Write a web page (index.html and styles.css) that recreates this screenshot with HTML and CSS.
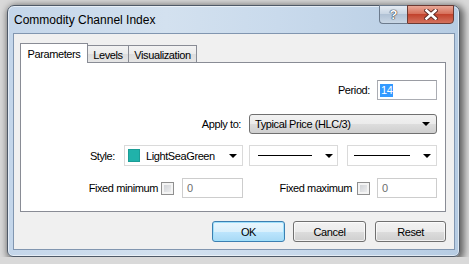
FILE: index.html
```html
<!DOCTYPE html>
<html lang="en">
<head>
  <meta charset="UTF-8">
  <title>Commodity Channel Index</title>
  <link rel="stylesheet" href="styles.css">
</head>
<body>

  <div class="window">
    <div class="titlebar">
      <span class="title">Commodity Channel Index</span>
      <div class="caption-btns">
        <div class="cap-btn help">?</div>
        <div class="cap-btn close">
          <svg width="14" height="11" viewBox="0 0 14 11">
            <path d="M2.5 1.5 L11.5 9.5 M11.5 1.5 L2.5 9.5" stroke="#5b2a24" stroke-width="4.4" stroke-linecap="square"/>
            <path d="M2.5 1.5 L11.5 9.5 M11.5 1.5 L2.5 9.5" stroke="#fff" stroke-width="2.6" stroke-linecap="square"/>
          </svg>
        </div>
      </div>
    </div>

    <div class="client">
      <div class="tabs">
        <div class="tab active">Parameters</div>
        <div class="tab t-levels">Levels</div>
        <div class="tab t-vis">Visualization</div>
      </div>

      <div class="panel">
        <div class="row r-period">
          <span class="lbl">Period:</span>
          <div class="edit period"><span class="sel">14</span></div>
        </div>

        <div class="row r-apply">
          <span class="lbl">Apply to:</span>
          <div class="combo apply">
            <span class="combo-text">Typical Price (HLC/3)</span>
            <span class="arrow"></span>
          </div>
        </div>

        <div class="row r-style">
          <span class="lbl">Style:</span>
          <div class="flat color">
            <span class="swatch"></span>
            <span class="combo-text">LightSeaGreen</span>
            <span class="arrow"></span>
          </div>
          <div class="flat line l1">
            <span class="stroke"></span>
            <span class="arrow"></span>
          </div>
          <div class="flat line l2">
            <span class="stroke"></span>
            <span class="arrow"></span>
          </div>
        </div>

        <div class="row r-fixed">
          <div class="fixed">
            <span class="lbl">Fixed minimum</span>
            <span class="check cmin"></span>
            <div class="edit off fmin">0</div>
          </div>
          <div class="fixed fixed-max">
            <span class="lbl">Fixed maximum</span>
            <span class="check cmax"></span>
            <div class="edit off fmax">0</div>
          </div>
        </div>
      </div>

      <div class="buttons">
        <div class="btn default">OK</div>
        <div class="btn">Cancel</div>
        <div class="btn reset">Reset</div>
      </div>
    </div>
  </div>

</body>
</html>
```

FILE: styles.css
```css
body {
  margin: 0;
  background: #d9d9d9;
  font-family: "Liberation Sans", Arial, sans-serif;
  font-size: 11px;
  letter-spacing: -0.4px;
  color: #000;
}

/* --- window frame --- */
.window {
  width: 453px;
  height: 252px;
  margin: 5px 0 0 7px;
  box-sizing: border-box;
  border: 1px solid #4f5a68;
  border-radius: 7px 7px 6px 6px;
  background: linear-gradient(to right, #c4d6ea, #d3e1ef 35%, #c9daec 60%, #b6cce3);
  box-shadow: inset 0 0 0 1px rgba(255,255,255,0.55), 2px 2px 7px 2px rgba(0,0,0,0.55);
  display: flex;
  flex-direction: column;
}

.titlebar {
  height: 27px;
  display: flex;
  align-items: flex-start;
  padding: 0 5px 0 6px;
}

.title {
  margin-top: 7px;
  line-height: 14px;
  font-size: 12px;
  letter-spacing: 0;
}

.caption-btns {
  margin-left: auto;
  margin-top: -1px;
  display: flex;
}

.cap-btn {
  height: 19px;
  box-sizing: border-box;
  display: flex;
  align-items: center;
  justify-content: center;
}

.help {
  width: 28px;
  border: 1px solid #6c7b8d;
  border-right: none;
  border-radius: 0 0 0 4px;
  background: linear-gradient(#e4ebf3, #c7d4e2 50%, #b1c2d5 50%, #c9d7e5);
  color: #fff;
  font-weight: bold;
  font-size: 13px;
  letter-spacing: 0;
  text-shadow: 0 0 1px #27303c, 0 0 1px #27303c, 0 0 1px #27303c;
}

.close {
  width: 47px;
  border: 1px solid #6b3a33;
  border-radius: 0 0 4px 0;
  background: linear-gradient(#e9a897, #d56b55 50%, #c2432d 50%, #d4725e);
}

/* --- client area --- */
.client {
  flex: 1;
  margin: 0 4px 6px 5px;
  border: 1px solid #8196b0;
  background: #f0f0f0;
  padding: 9px 8px 0 6px;
}

.tabs {
  display: flex;
  align-items: flex-end;
  height: 19px;
}

.tab {
  height: 17px;
  box-sizing: border-box;
  border: 1px solid #898c95;
  border-bottom: none;
  background: linear-gradient(#f3f3f3, #ebebeb 50%, #dddddd 50%, #e5e5e5);
  display: flex;
  align-items: center;
  justify-content: center;
  padding-top: 1px;
}

.tab.active {
  width: 68px;
  height: 20px;
  margin-bottom: -1px;
  background: #fff;
  position: relative;
  z-index: 1;
  padding-top: 0;
}

.t-levels {
  width: 42px;
  margin-left: -1px;
}

.t-vis {
  width: 69px;
  margin-left: -1px;
}

.panel {
  height: 150px;
  box-sizing: border-box;
  border: 1px solid #898c95;
  background: #fff;
  padding: 17px 8px 0 0;
}

.row {
  display: flex;
  justify-content: flex-end;
  align-items: center;
  height: 20px;
}

.r-apply { margin-top: 14px; }
.r-style { margin-top: 11px; height: 21px; }
.r-fixed { margin-top: 12px; }

.r-period .lbl { margin-right: 7px; }
.r-apply .lbl { margin-right: 8px; }
.r-style .lbl { margin-right: 9px; }

.fixed {
  display: flex;
  align-items: center;
}

.fixed-max {
  width: 194px;
  justify-content: flex-end;
}

/* --- edit boxes --- */
.edit {
  height: 20px;
  box-sizing: border-box;
  border: 1px solid #abadb3;
  border-top-color: #9a9ca3;
  background: #fff;
  display: flex;
  align-items: center;
  padding-left: 2px;
}

.period { width: 60px; }

.sel {
  background: #3399ff;
  color: #fff;
  line-height: 13px;
  padding: 0 1px;
}

.edit.off {
  border-color: #cdcdcd;
  color: #6d6d6d;
  padding-left: 4px;
}

.fmin { width: 61px; }
.fmax { width: 60px; }

.check {
  width: 13px;
  height: 13px;
  box-sizing: border-box;
  border: 1px solid #8f8f8f;
  background: linear-gradient(135deg, #c9ccd1, #f4f4f4);
  box-shadow: inset 0 0 0 2px #f4f4f4;
}

.cmin { margin: 0 8px 0 3px; }
.cmax { margin: 0 7px 0 5px; }

/* --- combo boxes --- */
.combo {
  width: 188px;
  height: 20px;
  box-sizing: border-box;
  border: 1px solid #707070;
  border-radius: 3px;
  background: linear-gradient(#f2f2f2, #ebebeb 50%, #dddddd 50%, #cfcfcf);
  display: flex;
  align-items: center;
  padding: 0 6px 0 5px;
}

.combo-text { flex: 1; }

.arrow {
  width: 0;
  height: 0;
  border-left: 4px solid transparent;
  border-right: 4px solid transparent;
  border-top: 4px solid #000;
}

.flat {
  height: 21px;
  box-sizing: border-box;
  border: 1px solid #dadada;
  background: #fff;
  display: flex;
  align-items: center;
  padding: 0 5px 0 3px;
}

.color { width: 119px; }

.swatch {
  width: 12px;
  height: 13px;
  box-sizing: border-box;
  background: #20b2aa;
  border: 1px solid #1b9d96;
  margin-right: 6px;
}

.line { padding: 0 4px 0 8px; }
.l1 { width: 89px; margin-left: 6px; }
.l2 { width: 90px; margin-left: 9px; padding-left: 6px; padding-right: 5px; }

.stroke {
  flex: 1;
  height: 1px;
  background: #000;
  margin-right: 13px;
}

/* --- dialog buttons --- */
.buttons {
  display: flex;
  justify-content: flex-end;
  gap: 8px;
  margin-top: 9px;
}

.btn {
  width: 73px;
  height: 21px;
  box-sizing: border-box;
  border: 1px solid #707070;
  border-radius: 3px;
  background: linear-gradient(#f2f2f2, #ebebeb 50%, #dddddd 50%, #cfcfcf);
  box-shadow: inset 0 0 0 1px rgba(255,255,255,0.7);
  display: flex;
  align-items: center;
  justify-content: center;
}

.btn.default {
  border-color: #3c7fb1;
  background: linear-gradient(#eaf6fd, #d9f0fc 50%, #bee6fd 50%, #a7d9f5);
  box-shadow: inset 0 0 0 1px #9fe0fb;
}

.reset { width: 71px; margin-left: 1px; }
```
